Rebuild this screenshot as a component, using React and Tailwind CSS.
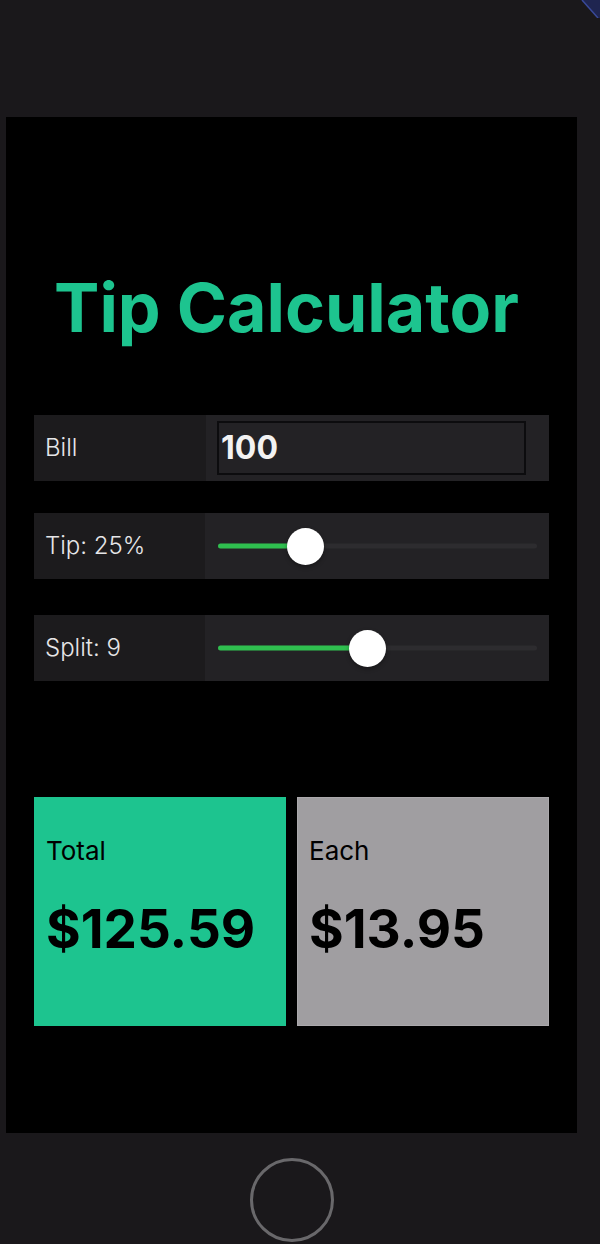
import React from "react";

const font = { fontFamily: "Inter, 'Noto Sans', sans-serif" };

function Slider({ pct }) {
  return (
    <div className="relative h-[37px] w-full">
      <div className="absolute left-0 right-0 top-1/2 h-[5px] -translate-y-1/2 rounded-full bg-[#2d2c2f]" />
      <div
        className="absolute left-0 top-1/2 h-[5px] -translate-y-1/2 rounded-full bg-[#2fbf4f]"
        style={{ width: `calc(18.5px + (100% - 37px) * ${pct})` }}
      />
      <div
        className="absolute top-0 h-[37px] w-[37px] rounded-full bg-white shadow-[0_2px_4px_rgba(0,0,0,0.35)]"
        style={{ left: `calc((100% - 37px) * ${pct})` }}
      />
    </div>
  );
}

function Row({ label, children, className = "" }) {
  return (
    <div className={`flex h-[66px] w-full ${className}`}>
      <div className="flex w-[172px] items-center bg-[#1c1b1d] pl-[11px] text-[24px] font-light text-[#e6e6e8]">
        {label}
      </div>
      <div className="flex flex-1 items-center bg-[#232225] pl-[12px] pr-[12px]">{children}</div>
    </div>
  );
}

export default function App() {
  return (
    <div className="relative h-[1244px] w-[600px] overflow-hidden bg-[#1a181b]" style={font}>
      <svg className="absolute right-0 top-0" width="22" height="18" viewBox="0 0 22 18">
        <path d="M4 0 L20 18 L22 18 L22 0 Z" fill="#1f2550" />
        <path d="M4 0 L20 18" stroke="#3a4a9a" strokeWidth="1.5" />
      </svg>
      <div className="pl-[6px] pt-[117px]">
        <div className="flex h-[1016px] w-[571px] flex-col bg-black px-[28px]">
          <h1 className="mt-[156px] h-[67px] pl-[20px] text-[68px] font-bold leading-none text-[#1dc48f]">
            Tip Calculator
          </h1>
          <Row label="Bill" className="mt-[75px]">
            <div className="flex h-[54px] w-[309px] -ml-[1px] items-center border-2 border-[#0c0c0e] bg-[#232225] pl-[2px] text-[32px] font-bold text-[#f2f2f2]">
              100
            </div>
          </Row>
          <Row label="Tip: 25%" className="mt-[32px]">
            <div className="ml-[1px] w-[319px]">
              <Slider pct={0.246} />
            </div>
          </Row>
          <Row label="Split: 9" className="mt-[36px]">
            <div className="ml-[1px] w-[319px]">
              <Slider pct={0.465} />
            </div>
          </Row>
          <div className="mt-[116px] flex h-[229px] gap-[11px]">
            <div className="flex w-[252px] flex-col bg-[#1dc48f] pl-[12px] pt-[41px] text-black">
              <div className="text-[26px] leading-none">Total</div>
              <div className="mt-[39px] text-[53px] font-bold leading-none">$125.59</div>
            </div>
            <div className="flex w-[252px] flex-col border border-[#aba9ac] bg-[#a09ea1] pl-[11px] pt-[40px] text-black">
              <div className="text-[26px] leading-none">Each</div>
              <div className="mt-[39px] text-[53px] font-bold leading-none">$13.95</div>
            </div>
          </div>
        </div>
      </div>
      <div className="flex justify-center">
        <div className="ml-[-17px] mt-[25px] h-[84px] w-[84px] rounded-full border-[3px] border-[#69686b]" />
      </div>
    </div>
  );
}
